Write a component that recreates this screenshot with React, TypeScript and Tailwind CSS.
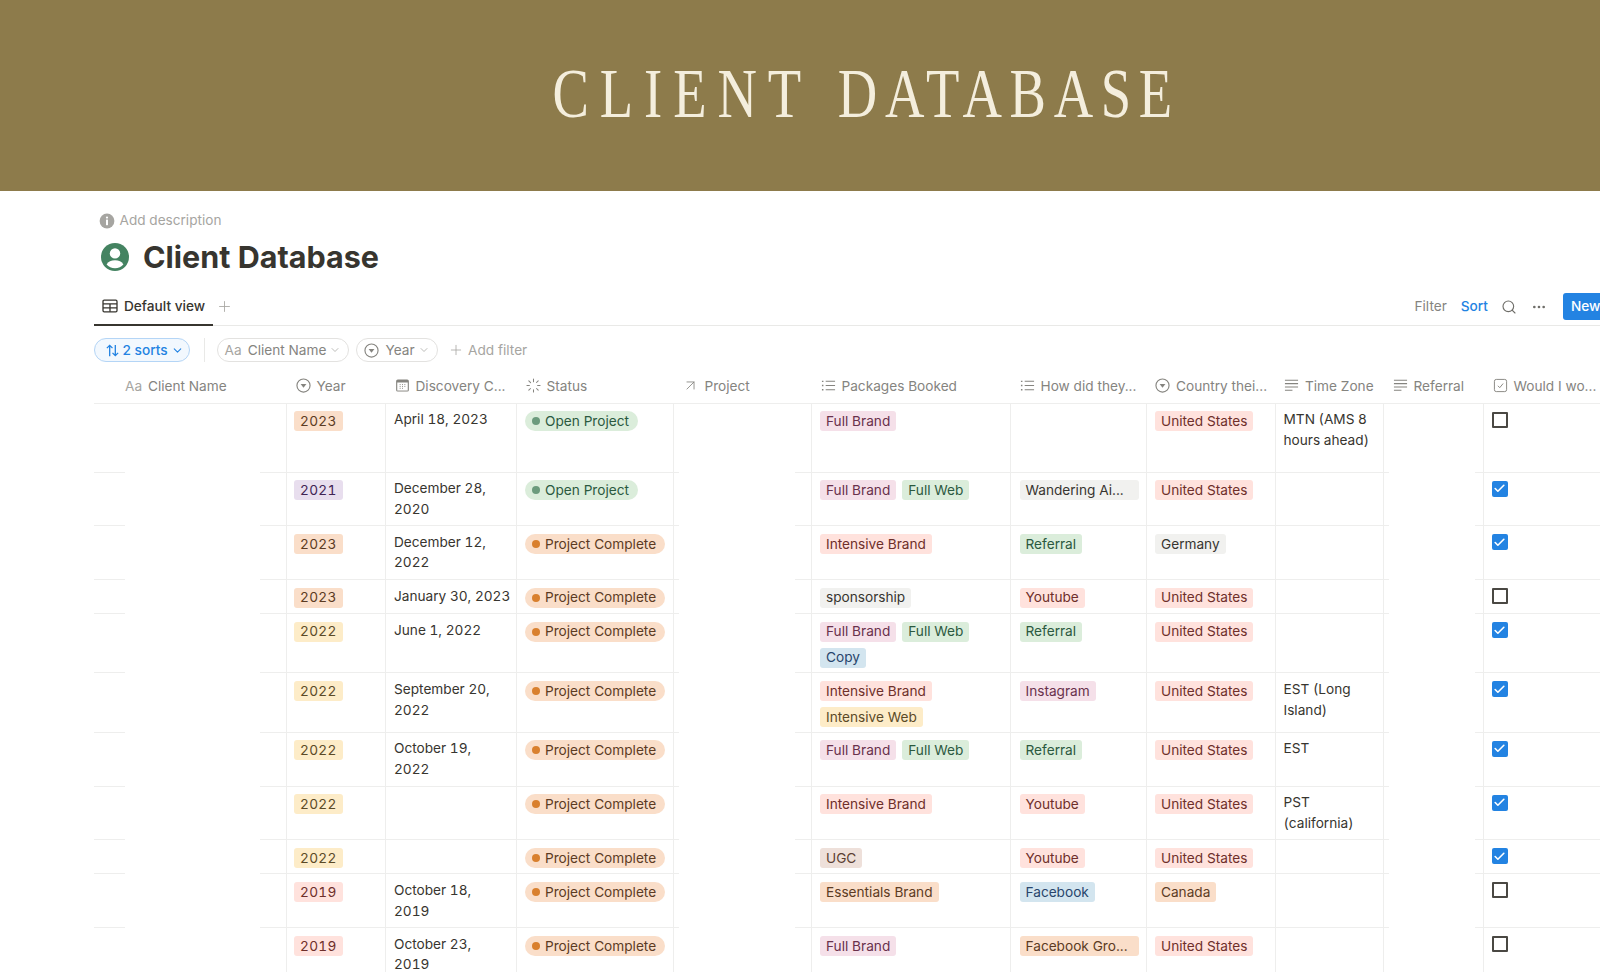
import { ChevronDown, Search, Plus, ArrowUpRight, Check, Ellipsis } from "lucide-react"

type Color = "orange" | "purple" | "yellow" | "red" | "green" | "pink" | "blue" | "gray" | "light" | "brown"

const tagColors: Record<Color, string> = {
  orange: "bg-[#fadec9] text-[#5c3b23]",
  purple: "bg-[#e8deee] text-[#412454]",
  yellow: "bg-[#fdecc8] text-[#5b4a27]",
  red: "bg-[#ffe2dd] text-[#6e2f2a]",
  green: "bg-[#dbeddb] text-[#2b593f]",
  pink: "bg-[#f5e0e9] text-[#69314c]",
  blue: "bg-[#d3e5ef] text-[#28456c]",
  gray: "bg-[#f1f1ef] text-[#37352f]",
  light: "bg-[#f1f1ef] text-[#37352f]",
  brown: "bg-[#eee0da] text-[#5c4033]",
}

type TagData = [string, Color]

interface RowData {
  height: string
  year: TagData
  date?: string
  open?: boolean
  packages: TagData[]
  source?: TagData
  sourceWide?: boolean
  country: TagData
  zone?: string
  checked: boolean
}

const usa: TagData = ["United States", "red"]
const fullBrand: TagData = ["Full Brand", "pink"]
const fullWeb: TagData = ["Full Web", "green"]
const intensive: TagData = ["Intensive Brand", "red"]
const referral: TagData = ["Referral", "green"]
const youtube: TagData = ["Youtube", "red"]

const rows: RowData[] = [
  { height: "h-[69px]", year: ["2023", "orange"], date: "April 18, 2023", open: true, packages: [fullBrand], country: usa, zone: "MTN (AMS 8\nhours ahead)", checked: false },
  { height: "h-[53.8px]", year: ["2021", "purple"], date: "December 28,\n2020", open: true, packages: [fullBrand, fullWeb], source: ["Wandering Ai...", "light"], sourceWide: true, country: usa, checked: true },
  { height: "h-[53.8px]", year: ["2023", "orange"], date: "December 12,\n2022", packages: [intensive], source: referral, country: ["Germany", "gray"], checked: true },
  { height: "h-[34px]", year: ["2023", "orange"], date: "January 30, 2023", packages: [["sponsorship", "light"]], source: youtube, country: usa, checked: false },
  { height: "h-[59.4px]", year: ["2022", "yellow"], date: "June 1, 2022", packages: [fullBrand, fullWeb, ["Copy", "blue"]], source: referral, country: usa, checked: true },
  { height: "h-[59.4px]", year: ["2022", "yellow"], date: "September 20,\n2022", packages: [intensive, ["Intensive Web", "yellow"]], source: ["Instagram", "pink"], country: usa, zone: "EST (Long\nIsland)", checked: true },
  { height: "h-[53.8px]", year: ["2022", "yellow"], date: "October 19,\n2022", packages: [fullBrand, fullWeb], source: referral, country: usa, zone: "EST", checked: true },
  { height: "h-[53.8px]", year: ["2022", "yellow"], packages: [intensive], source: youtube, country: usa, zone: "PST\n(california)", checked: true },
  { height: "h-[34px]", year: ["2022", "yellow"], packages: [["UGC", "brown"]], source: youtube, country: usa, checked: true },
  { height: "h-[53.8px]", year: ["2019", "red"], date: "October 18,\n2019", packages: [["Essentials Brand", "orange"]], source: ["Facebook", "blue"], country: ["Canada", "orange"], checked: false },
  { height: "h-[53.8px]", year: ["2019", "red"], date: "October 23,\n2019", packages: [fullBrand], source: ["Facebook Gro...", "orange"], sourceWide: true, country: usa, checked: false },
]

const gridCols = "grid grid-cols-[193px_99px_131px_157px_138px_199px_135.5px_129px_108.5px_100px_116px]"

function SelectIcon() {
  return (
    <svg viewBox="0 0 16 16" className="h-[15px] w-[15px] shrink-0">
      <circle cx="8" cy="8" r="7" fill="none" stroke="currentColor" strokeWidth="1.2" />
      <path d="M4.9 6.3h6.2L8 10.4z" fill="currentColor" />
    </svg>
  )
}

function CalendarIcon() {
  return (
    <svg viewBox="0 0 16 16" className="h-[15px] w-[15px] shrink-0">
      <rect x="1.2" y="1.5" width="13.6" height="13" rx="1.8" fill="currentColor" />
      <rect x="2.4" y="4.8" width="11.2" height="8.6" fill="#fff" />
      <path d="M5 7h1M7.5 7h1M10 7h1M5 9h1M7.5 9h1M10 9h1M5 11h1M7.5 11h1" stroke="currentColor" strokeWidth="1" />
    </svg>
  )
}

function StatusIcon() {
  return (
    <svg viewBox="0 0 16 16" className="h-[15px] w-[15px] shrink-0" fill="none" stroke="currentColor" strokeWidth="1.1" strokeLinecap="round">
      <path d="M8 1v3M8 12.5V15M1 8h2.6M12.4 8H15M3 3l1.9 1.9M11.2 11.2L13 13M13 3l-1.8 1.8M4.8 11.2L3 13" />
    </svg>
  )
}

function ListIcon() {
  return (
    <svg viewBox="0 0 16 16" className="h-[15px] w-[15px] shrink-0" fill="none" stroke="currentColor" strokeWidth="1.1">
      <path d="M5 3.5h10M5 8h10M5 12.5h10" />
      <path d="M1 3.5h1.6M1 8h1.6M1 12.5h1.6" strokeWidth="1.4" />
    </svg>
  )
}

function TextIcon() {
  return (
    <svg viewBox="0 0 16 16" className="h-[15px] w-[15px] shrink-0" fill="none" stroke="currentColor" strokeWidth="1.1">
      <path d="M1 2.5h14M1 6h14M1 9.5h14M1 13h8" />
    </svg>
  )
}

function CheckboxIcon() {
  return (
    <svg viewBox="0 0 16 16" className="h-[15px] w-[15px] shrink-0" fill="none" stroke="currentColor" strokeWidth="1">
      <rect x="1.5" y="1.5" width="13" height="13" rx="2" />
      <path d="M5.2 8.3l2 2 3.6-4.4" />
    </svg>
  )
}

function TableIcon() {
  return (
    <svg viewBox="0 0 16 16" className="h-[16px] w-[16px] shrink-0" fill="none" stroke="#37352f" strokeWidth="1.3">
      <rect x="1" y="2.2" width="14" height="11.6" rx="1.2" />
      <path d="M1 5.9h14M1 9.8h14M8 5.9v7.9" />
    </svg>
  )
}

function Tag({ data, wide }: { data: TagData; wide?: boolean }) {
  return (
    <span className={`inline-flex h-[20px] items-center rounded-[3px] px-[6px] whitespace-nowrap ${wide ? "w-[119px]" : ""} ${tagColors[data[1]]}`}>
      {data[0]}
    </span>
  )
}

function YearTag({ data }: { data: TagData }) {
  return (
    <span className={`inline-flex h-[20px] items-center rounded-[3px] px-[6px] tabular-nums tracking-[0.3px] ${tagColors[data[1]]}`}>
      {data[0]}
    </span>
  )
}

function Status({ open }: { open?: boolean }) {
  return (
    <span className={`inline-flex h-[20px] items-center rounded-full pl-[7px] pr-[9px] whitespace-nowrap ${open ? "bg-[#dbeddb] text-[#2b593f]" : "bg-[#fadec9] text-[#5c3b23]"}`}>
      <span className={`mr-[5px] h-[8px] w-[8px] rounded-full ${open ? "bg-[#6c9b7d]" : "bg-[#d9802e]"}`} />
      {open ? "Open Project" : "Project Complete"}
    </span>
  )
}

function HeaderCell({ icon, label }: { icon: React.ReactNode; label: string }) {
  return (
    <div className="flex items-center gap-[6px] pl-[8.5px] whitespace-nowrap">
      {icon}
      <span>{label}</span>
    </div>
  )
}

function Row({ row }: { row: RowData }) {
  const cell = "flex items-start border-r border-[#eeeeed] pl-[8.5px] pt-[7.5px]"
  const textCell = "whitespace-pre border-r border-[#eeeeed] pl-[8px] pt-[5.5px] leading-[20.6px] tabular-nums text-[#37352f]"
  return (
    <div className={`${gridCols} ${row.height} overflow-hidden border-b border-[#eeeeed]`}>
      <div className="border-r border-[#eeeeed]" />
      <div className="flex items-start border-r border-[#eeeeed] pl-[7px] pt-[7.5px]"><YearTag data={row.year} /></div>
      <div className={textCell}>{row.date}</div>
      <div className="flex items-start border-r border-[#eeeeed] pl-[8px] pt-[7.5px]"><Status open={row.open} /></div>
      <div className="border-r border-[#eeeeed]" />
      <div className="flex flex-wrap content-start gap-x-[6px] gap-y-[6px] border-r border-[#eeeeed] px-[8px] pt-[7.5px]">
        {row.packages.map((p) => <Tag key={p[0]} data={p} />)}
      </div>
      <div className={cell}>{row.source && <Tag data={row.source} wide={row.sourceWide} />}</div>
      <div className={cell}><Tag data={row.country} /></div>
      <div className={textCell}>{row.zone}</div>
      <div className="border-r border-[#eeeeed]" />
      <div className="pl-[7.5px] pt-[8px]">
        {row.checked ? (
          <span className="flex h-[16px] w-[16px] items-center justify-center rounded-[2px] bg-[#2383e2]">
            <Check size={13} strokeWidth={3} className="text-white" />
          </span>
        ) : (
          <span className="block h-[16px] w-[16px] rounded-[1px] border-2 border-[#4a4843]" />
        )}
      </div>
    </div>
  )
}

export default function App() {
  return (
    <div className="h-[972px] w-[1600px] overflow-hidden bg-white font-['Inter',sans-serif] text-[13.65px] text-[#37352f]">
      <div className="flex h-[191px] items-center justify-center bg-[#8d7b4b] pb-[3px] pl-[132px]">
        <span className="flex origin-center scale-x-[0.78] gap-[33px] whitespace-nowrap font-['Liberation_Serif',serif] text-[70px] leading-none text-[#f4eedd]">
          <span className="tracking-[0.2em]">CLIENT</span>
          <span className="tracking-[0.14em]">DATABASE</span>
        </span>
      </div>

      <div className="pl-[94px]">
        <div className="mt-[19.5px] flex h-[20px] items-center gap-[5px] pl-[4.5px] text-[13.6px] text-[#a6a5a1]">
          <svg viewBox="0 0 16 16" className="h-[16px] w-[16px]">
            <circle cx="8" cy="8" r="7.4" fill="#a6a5a1" />
            <circle cx="8" cy="4.6" r="1.1" fill="#fff" />
            <rect x="7" y="6.6" width="2" height="5.6" rx="0.4" fill="#fff" />
          </svg>
          <span>Add description</span>
        </div>

        <div className="mt-[6.5px] flex h-[40px] items-center pl-[7px]">
          <svg viewBox="0 0 28 28" className="h-[28px] w-[28px]">
            <circle cx="14" cy="14" r="14" fill="#448361" />
            <circle cx="14" cy="10.4" r="5.2" fill="#fff" />
            <path d="M5.6 21.4c1.6-2.9 4.6-4.2 8.4-4.2s6.8 1.3 8.4 4.2c-2 2.4-5 3.8-8.4 3.8s-6.4-1.4-8.4-3.8z" fill="#fff" />
          </svg>
          <h1 className="ml-[14px] text-[30.5px] font-bold leading-none text-[#37352f]">Client Database</h1>
        </div>

        <div className="mt-[13px] flex h-[36px] items-stretch border-b border-[#e9e9e7]">
          <div className="-mb-px flex w-[119px] items-center gap-[6px] border-b-2 border-[#37352f] pb-[2px] pl-[8px] font-medium">
            <TableIcon />
            Default view
          </div>
          <div className="flex items-center pb-[2px] pl-[3px]">
            <Plus size={17} strokeWidth={1.2} className="text-[#a6a5a1]" />
          </div>
          <div className="ml-auto flex items-center pb-[2px] text-[#85847f]">
            <span>Filter</span>
            <span className="ml-[14px] font-medium text-[#2383e2]">Sort</span>
            <Search size={16} strokeWidth={1.7} className="ml-[13px] text-[#6f6e69]" />
            <Ellipsis size={16} strokeWidth={2} className="ml-[14px] text-[#6f6e69]" />
            <span className="ml-[16px] flex h-[27px] w-[37px] items-center rounded-l-[3px] bg-[#2383e2] pl-[8px] font-medium text-white">New</span>
          </div>
        </div>

        <div className="mt-[12px] flex h-[24px] items-center text-[#85847f]">
          <div className="flex h-[24px] w-[96px] items-center gap-[3px] rounded-full border border-[#b4d5f6] bg-[#f2f8fe] pl-[9.5px] font-medium text-[#2383e2]">
            <svg viewBox="0 0 16 16" className="h-[15px] w-[15px]" fill="none" stroke="currentColor" strokeWidth="1.4">
              <path d="M5 14V2.5M2 5.5l3-3 3 3M11 2v11.5M8 10.5l3 3 3-3" />
            </svg>
            2 sorts
            <ChevronDown size={13} strokeWidth={2} />
          </div>
          <div className="ml-[14px] h-[24px] w-px bg-[#e9e9e7]" />
          <div className="ml-[12px] flex h-[24px] w-[132px] items-center justify-center gap-[3px] rounded-full border border-[#e3e2e0]">
            <span className="text-[#a6a5a1]">Aa</span>
            <span className="ml-[3px]">Client Name</span>
            <ChevronDown size={12} strokeWidth={1.5} className="text-[#a6a5a1]" />
          </div>
          <div className="ml-[7px] flex h-[24px] w-[82px] items-center justify-center gap-[3px] rounded-full border border-[#e3e2e0]">
            <SelectIcon />
            <span className="ml-[3px]">Year</span>
            <ChevronDown size={12} strokeWidth={1.5} className="text-[#a6a5a1]" />
          </div>
          <div className="ml-[10px] flex items-center gap-[4px] text-[#a6a5a1]">
            <Plus size={16} strokeWidth={1.2} />
            Add filter
          </div>
        </div>

        <div className={`${gridCols} mt-[6.5px] h-[35px] items-center border-b border-[#eeeeed] pt-[1px] text-[#85847f]`}>
          <div className="pl-[31px]"><span className="text-[#a6a5a1]">Aa</span> <span className="ml-[2px]">Client Name</span></div>
          <HeaderCell icon={<SelectIcon />} label="Year" />
          <HeaderCell icon={<CalendarIcon />} label="Discovery C..." />
          <HeaderCell icon={<StatusIcon />} label="Status" />
          <HeaderCell icon={<ArrowUpRight size={17} strokeWidth={1.2} className="-ml-[1px] shrink-0" />} label="Project" />
          <HeaderCell icon={<ListIcon />} label="Packages Booked" />
          <HeaderCell icon={<ListIcon />} label="How did they..." />
          <HeaderCell icon={<SelectIcon />} label="Country thei..." />
          <HeaderCell icon={<TextIcon />} label="Time Zone" />
          <HeaderCell icon={<TextIcon />} label="Referral" />
          <HeaderCell icon={<CheckboxIcon />} label="Would I wo..." />
        </div>

        <div className="relative">
          {rows.map((row, i) => <Row key={i} row={row} />)}
          <div className="absolute bottom-0 left-[31px] top-0 w-[135px] bg-white" />
          <div className="absolute bottom-0 left-[585px] top-0 w-[116px] bg-white" />
          <div className="absolute bottom-0 left-[1295px] top-0 w-[86px] bg-white" />
        </div>
      </div>
    </div>
  )
}
